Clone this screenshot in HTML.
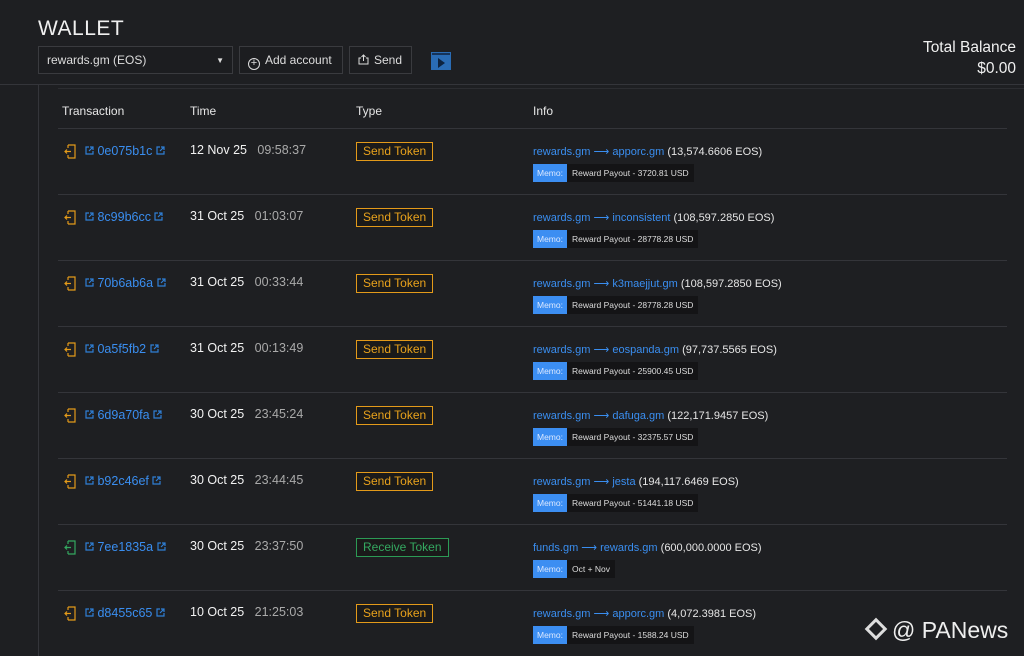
<!DOCTYPE html>
<html><head><meta charset="utf-8"><style>
*{margin:0;padding:0;box-sizing:border-box}
body{width:1024px;height:656px;background:#1e1f22;color:#e6e6e6;font-family:"Liberation Sans",sans-serif;position:relative;overflow:hidden}
.a{position:absolute;white-space:nowrap}
.btn{position:absolute;top:46px;height:28px;border:1px solid #3a3b3f;background:#1c1d20;font-size:12px;color:#ddd;line-height:27px;padding-left:8px}
.hl{position:absolute;left:58px;width:949px;height:1px;background:#34353a}
.blue{color:#3a8ef0}
.tag{position:absolute;height:19px;border:1px solid #e39a1a;color:#e8a21c;font-size:12px;line-height:17px;padding:0 6px;background:#1a1a1a}
.tag.g{border-color:#2c9a55;color:#34a860}
.memo{position:absolute;height:18px;font-size:8.5px;line-height:18px}
.memo b{font-weight:normal;background:#3c8ef2;color:#dbe8ff;padding:0 4px;display:inline-block;height:18px}
.memo span{background:#141416;color:#ddd;padding:0 5px;display:inline-block;height:18px}
</style></head><body>
<div class="a" style="left:38px;top:17px;font-size:21px;color:#f0f0f0;letter-spacing:0.5px">WALLET</div>
<div class="btn" style="left:38px;width:195px">rewards.gm (EOS)<span style="position:absolute;right:8px;top:0;font-size:8px">▼</span></div>
<div class="btn" style="left:239px;width:104px"><span style="display:inline-block;width:12px;height:12px;border:1px solid #ddd;border-radius:50%;vertical-align:-2px;text-align:center;line-height:9px;font-size:11px;margin-right:5px">+</span>Add account</div>
<div class="btn" style="left:349px;width:63px"><svg width="11" height="11" viewBox="0 0 11 11" style="vertical-align:-1px;margin-right:5px"><path d="M3 4H1v6h9V4H8M5.5 7V1M3.5 3l2-2 2 2" fill="none" stroke="#ddd" stroke-width="1"/></svg>Send</div>
<div class="a" style="left:431px;top:52px;width:20px;height:18px;background:#2a6cb5"><div style="position:absolute;left:1px;top:1px;width:18px;height:2px;background:#15335a"></div><div style="position:absolute;left:7px;top:6px;border-left:7px solid #0d2340;border-top:5px solid transparent;border-bottom:5px solid transparent"></div></div>
<div class="a" style="right:8px;top:39px;font-size:15.5px;color:#f0f0f0">Total Balance</div>
<div class="a" style="right:8px;top:60px;font-size:15.5px;color:#f0f0f0">$0.00</div>
<div class="a" style="left:0;top:84px;width:1024px;height:1px;background:#34353a"></div>
<div class="a" style="left:38px;top:85px;width:1px;height:571px;background:#34353a"></div>
<div class="a" style="left:58px;top:88px;width:966px;height:1px;background:#2c2d31"></div>
<div class="a" style="left:62px;top:104px;font-size:12px">Transaction</div>
<div class="a" style="left:190px;top:104px;font-size:12px">Time</div>
<div class="a" style="left:356px;top:104px;font-size:12px">Type</div>
<div class="a" style="left:533px;top:104px;font-size:12px">Info</div>
<div id="rows"></div>
<script>
var d=[
["0e075b1c","12 Nov 25","09:58:37",0,"rewards.gm","apporc.gm","(13,574.6606 EOS)","Reward Payout - 3720.81 USD"],
["8c99b6cc","31 Oct 25","01:03:07",0,"rewards.gm","inconsistent","(108,597.2850 EOS)","Reward Payout - 28778.28 USD"],
["70b6ab6a","31 Oct 25","00:33:44",0,"rewards.gm","k3maejjut.gm","(108,597.2850 EOS)","Reward Payout - 28778.28 USD"],
["0a5f5fb2","31 Oct 25","00:13:49",0,"rewards.gm","eospanda.gm","(97,737.5565 EOS)","Reward Payout - 25900.45 USD"],
["6d9a70fa","30 Oct 25","23:45:24",0,"rewards.gm","dafuga.gm","(122,171.9457 EOS)","Reward Payout - 32375.57 USD"],
["b92c46ef","30 Oct 25","23:44:45",0,"rewards.gm","jesta","(194,117.6469 EOS)","Reward Payout - 51441.18 USD"],
["7ee1835a","30 Oct 25","23:37:50",1,"funds.gm","rewards.gm","(600,000.0000 EOS)","Oct + Nov"],
["d8455c65","10 Oct 25","21:25:03",0,"rewards.gm","apporc.gm","(4,072.3981 EOS)","Reward Payout - 1588.24 USD"]];
var h='';
var ext='<svg width="9" height="9" viewBox="0 0 9 9" style="vertical-align:0"><path d="M4 1H1v7h7V5M5 1h3v3M8 1L4 5" fill="none" stroke="#2f7fd6" stroke-width="1.2"/></svg>';
d.forEach(function(r,i){var t=128+66*i;
h+='<div class="hl" style="top:'+t+'px"></div>';
var c=r[3]?'#34a860':'#e39a1a';
h+='<div class="a" style="left:64px;top:'+(t+16)+'px"><svg width="12" height="15" viewBox="0 0 12 15"><path d="M4 1h7v13H4M4 1v3M4 14v-3M1 7.5h6M3 5.5L1 7.5l2 2" fill="none" stroke="'+c+'" stroke-width="1.2"/></svg></div>';
h+='<div class="a blue" style="left:85px;top:'+(t+16)+'px;font-size:12.5px">'+ext+' '+r[0]+' '+ext+'</div>';
h+='<div class="a" style="left:190px;top:'+(t+15)+'px;font-size:12.5px;color:#f2f2f2">'+r[1]+'&nbsp;&nbsp;&nbsp;<span style="color:#aaa">'+r[2]+'</span></div>';
h+='<div class="tag'+(r[3]?' g':'')+'" style="left:356px;top:'+(t+14)+'px">'+(r[3]?'Receive Token':'Send Token')+'</div>';
h+='<div class="a" style="left:533px;top:'+(t+17)+'px;font-size:11px"><span class="blue">'+r[4]+' &#x27F6; '+r[5]+'</span> '+r[6]+'</div>';
h+='<div class="memo" style="left:533px;top:'+(t+36)+'px"><b>Memo:</b><span>'+r[7]+'</span></div>';
});
document.getElementById('rows').innerHTML=h;
</script>
<div class="a" style="left:868px;top:617px;font-size:23px;color:#eee"><span style="display:inline-block;width:16px;height:16px;border:3px solid #ddd;transform:rotate(45deg);margin-right:8px;vertical-align:1px"></span>@ PANews</div>
</body></html>
